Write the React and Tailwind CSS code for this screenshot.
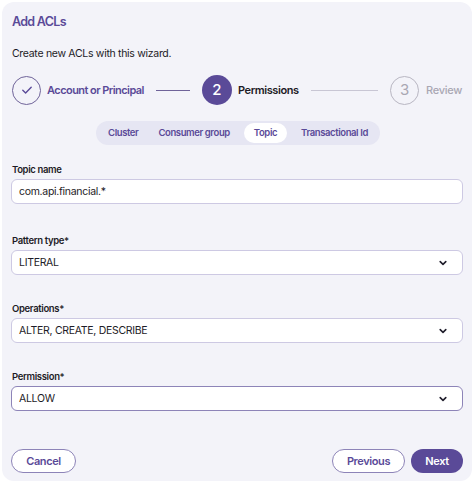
import React from "react";

const font = { fontFamily: "Inter, 'Noto Sans', sans-serif" };

function Chevron() {
  return (
    <svg width="10" height="10" viewBox="0 0 10 10" fill="none" className="shrink-0">
      <path d="M2.2 3.6 5 6.3 7.8 3.6" stroke="#1f1d2b" strokeWidth="1.6" strokeLinecap="round" strokeLinejoin="round" />
    </svg>
  );
}

function Field({ label, value, select, focused, className = "" }) {
  return (
    <div className={className}>
      <div className="text-[9.5px] font-semibold text-[#1d1b26] leading-[14px] tracking-[-0.35px] mb-[2px] ml-[1px]">{label}</div>
      <div
        className={
          "h-[25px] bg-white rounded-[6px] border flex items-center justify-between pl-[7px] pr-[14px] " +
          (focused ? "border-[#8d84b8]" : "border-[#cdc9e3]")
        }
      >
        <span className="text-[10.5px] text-[#1d1b26] tracking-[-0.3px]">{value}</span>
        {select && <Chevron />}
      </div>
    </div>
  );
}

export default function App() {
  const tabs = ["Cluster", "Consumer group", "Topic", "Transactional Id"];
  return (
    <div className="w-[474px] h-[483px] bg-white p-[2px]" style={font}>
      <div className="w-[470px] h-[479px] bg-[#f3f3f9] rounded-[12px] px-[9px] pt-[11px] flex flex-col">
        <h1 className="text-[12.5px] font-semibold text-[#5a4a98] leading-[18px] tracking-[-0.7px] ml-[1px]">Add ACLs</h1>
        <p className="text-[10.5px] text-[#1d1b26] mt-[15px] ml-[1px] leading-[16px] tracking-[-0.3px]">Create new ACLs with this wizard.</p>

        <div className="flex items-center mt-[13px] pl-[1px] pr-[1px]">
          <div className="w-[29px] h-[29px] shrink-0 rounded-full border border-[#6f6399] flex items-center justify-center">
            <svg width="12" height="10" viewBox="0 0 12 10" fill="none">
              <path d="M1.8 5.3 4.6 7.9 10.2 2.2" stroke="#5a4a98" strokeWidth="1.4" strokeLinecap="round" strokeLinejoin="round" />
            </svg>
          </div>
          <span className="ml-[6px] text-[11px] font-semibold text-[#5a4a98] tracking-[-0.55px] whitespace-nowrap">Account or Principal</span>
          <div className="w-[34px] shrink-0 h-px bg-[#6f6399] mx-[12px]" />
          <div className="w-[30px] h-[30px] shrink-0 rounded-full bg-[#5a4a98] flex items-center justify-center text-white text-[15px] font-medium">2</div>
          <span className="ml-[6px] text-[11px] font-semibold text-[#1d1b26] tracking-[-0.4px] whitespace-nowrap">Permissions</span>
          <div className="flex-1 h-px bg-[#c8c6d4] mx-[12px]" />
          <div className="w-[29px] h-[29px] shrink-0 rounded-full border border-[#b8b6c2] flex items-center justify-center text-[#a9a7b3] text-[15px]">3</div>
          <span className="ml-[7px] text-[11px] font-medium text-[#a9a7b3] tracking-[-0.3px] whitespace-nowrap">Review</span>
        </div>

        <div className="flex justify-center mt-[16px]">
          <div className="flex items-center bg-[#e6e6f3] rounded-full h-[24px] px-[2px] ml-[2px]">
            {tabs.map((t) => (
              <div
                key={t}
                className={
                  "text-[9.5px] font-semibold text-[#5a4a98] tracking-[-0.4px] h-[20px] flex items-center rounded-full whitespace-nowrap " +
                  (t === "Topic" ? "bg-white px-[10px] mx-[4px]" : "px-[10px]")
                }
              >
                {t}
              </div>
            ))}
          </div>
        </div>

        <div className="flex flex-col gap-[27px] mt-[18px]">
          <Field label="Topic name" value="com.api.financial.*" className="mb-[3px]" />
          <Field label="Pattern type*" value="LITERAL" select />
          <Field label="Operations*" value="ALTER, CREATE, DESCRIBE" select />
          <Field label="Permission*" value="ALLOW" select focused />
        </div>

        <div className="flex items-center justify-between mt-[38px]">
          <button className="h-[24px] w-[65px] rounded-full border border-[#8d84b8] text-[11px] font-semibold text-[#5a4a98] tracking-[-0.4px] bg-white">Cancel</button>
          <div className="flex gap-[6px]">
            <button className="h-[24px] w-[73px] rounded-full border border-[#8d84b8] text-[11px] font-semibold text-[#5a4a98] tracking-[-0.4px] bg-white">Previous</button>
            <button className="h-[24px] w-[52px] rounded-full bg-[#5a4a98] text-[11px] font-semibold text-white tracking-[-0.3px]">Next</button>
          </div>
        </div>
      </div>
    </div>
  );
}
